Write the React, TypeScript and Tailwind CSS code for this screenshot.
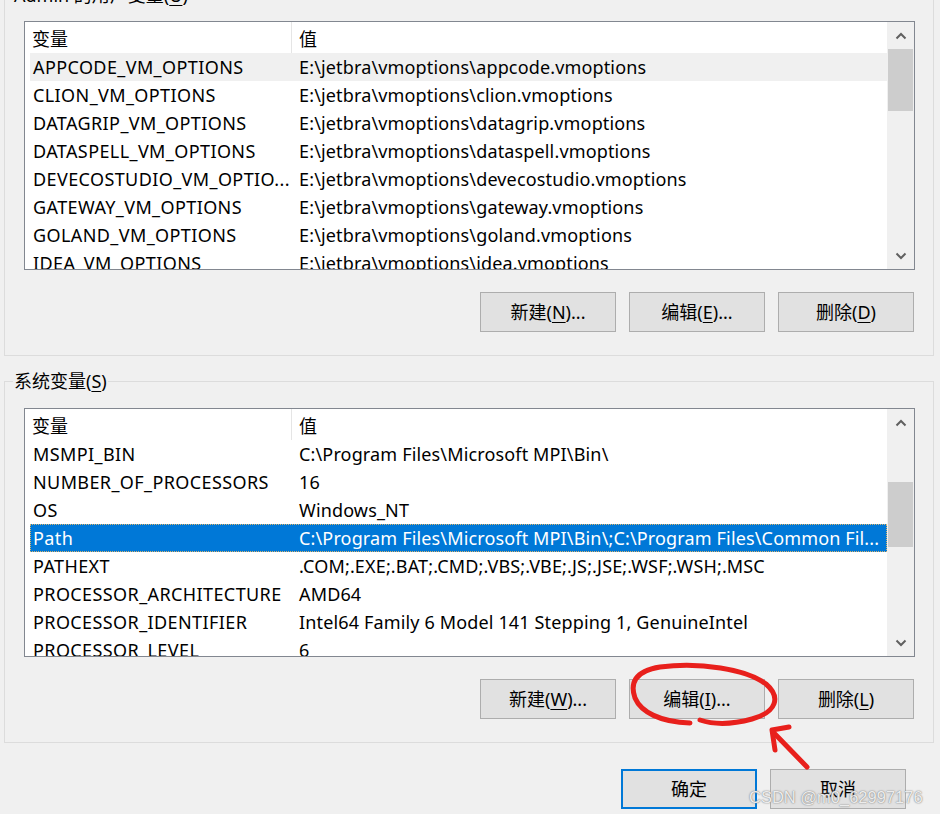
import React from "react";

type RowData = { name: string; value: string; hover?: boolean; selected?: boolean };

const topRows: RowData[] = [
  { name: "APPCODE_VM_OPTIONS", value: "E:\\jetbra\\vmoptions\\appcode.vmoptions", hover: true },
  { name: "CLION_VM_OPTIONS", value: "E:\\jetbra\\vmoptions\\clion.vmoptions" },
  { name: "DATAGRIP_VM_OPTIONS", value: "E:\\jetbra\\vmoptions\\datagrip.vmoptions" },
  { name: "DATASPELL_VM_OPTIONS", value: "E:\\jetbra\\vmoptions\\dataspell.vmoptions" },
  { name: "DEVECOSTUDIO_VM_OPTIO...", value: "E:\\jetbra\\vmoptions\\devecostudio.vmoptions" },
  { name: "GATEWAY_VM_OPTIONS", value: "E:\\jetbra\\vmoptions\\gateway.vmoptions" },
  { name: "GOLAND_VM_OPTIONS", value: "E:\\jetbra\\vmoptions\\goland.vmoptions" },
  { name: "IDEA_VM_OPTIONS", value: "E:\\jetbra\\vmoptions\\idea.vmoptions" },
];

const bottomRows: RowData[] = [
  { name: "MSMPI_BIN", value: "C:\\Program Files\\Microsoft MPI\\Bin\\" },
  { name: "NUMBER_OF_PROCESSORS", value: "16" },
  { name: "OS", value: "Windows_NT" },
  { name: "Path", value: "C:\\Program Files\\Microsoft MPI\\Bin\\;C:\\Program Files\\Common Fil...", selected: true },
  { name: "PATHEXT", value: ".COM;.EXE;.BAT;.CMD;.VBS;.VBE;.JS;.JSE;.WSF;.WSH;.MSC" },
  { name: "PROCESSOR_ARCHITECTURE", value: "AMD64" },
  { name: "PROCESSOR_IDENTIFIER", value: "Intel64 Family 6 Model 141 Stepping 1, GenuineIntel" },
  { name: "PROCESSOR_LEVEL", value: "6" },
];

function Chevron({ up }: { up?: boolean }) {
  return (
    <svg width="12" height="8" viewBox="0 0 12 8">
      <path
        d={up ? "M1.5 6.5 L6 2 L10.5 6.5" : "M1.5 1.5 L6 6 L10.5 1.5"}
        fill="none"
        stroke="#606060"
        strokeWidth="2"
      />
    </svg>
  );
}

function Row({ r }: { r: RowData }) {
  const bg = r.selected
    ? "bg-[#0078d7] text-white outline-1 outline-dotted outline-[#d9b36c] -outline-offset-1"
    : r.hover
    ? "bg-[#f0f0f0] text-black"
    : "text-black";
  return (
    <div className={`flex h-[28px] shrink-0 items-center whitespace-nowrap ${bg}`}>
      <div className="w-[261px] shrink-0 overflow-hidden pl-[3px] tracking-[0.4px]">{r.name}</div>
      <div className="min-w-0 flex-1 overflow-hidden pl-[8px] tracking-[0.15px]">{r.value}</div>
    </div>
  );
}

function ListView({
  rows,
  thumbOffset,
  thumbHeight,
}: {
  rows: RowData[];
  thumbOffset: number;
  thumbHeight: number;
}) {
  return (
    <div className="flex h-[249px] w-[891px] border border-[#828790] bg-white">
      <div className="flex min-w-0 flex-1 flex-col overflow-hidden pl-[5px]">
        <div className="flex h-[31px] shrink-0 items-center pt-[4px] text-black">
          <div className="h-full w-[261px] shrink-0 pl-[2px] leading-[27px]">变量</div>
          <div className="h-[31px] -mt-[4px] w-px bg-[#e5e5e5]" />
          <div className="h-full flex-1 pl-[7px] leading-[27px]">值</div>
        </div>
        {rows.map((r) => (
          <Row key={r.name} r={r} />
        ))}
      </div>
      <div className="flex w-[27px] shrink-0 flex-col bg-[#f0f0f0]">
        <div className="flex h-[26px] shrink-0 items-center justify-center pt-[2px]">
          <Chevron up />
        </div>
        <div className="flex flex-1 flex-col">
          <div style={{ height: thumbOffset }} className="shrink-0" />
          <div style={{ height: thumbHeight }} className="mx-[1px] shrink-0 bg-[#cdcdcd]" />
        </div>
        <div className="flex h-[26px] shrink-0 items-center justify-center">
          <Chevron />
        </div>
      </div>
    </div>
  );
}

function Btn({ children, primary }: { children: React.ReactNode; primary?: boolean }) {
  return (
    <div
      className={`flex h-[40px] w-[136px] items-center justify-center bg-[#e1e1e1] text-black ${
        primary ? "border-2 border-[#0078d7]" : "border border-[#adadad]"
      }`}
    >
      {children}
    </div>
  );
}

function Mn({ k }: { k: string }) {
  return <span className="underline decoration-1 underline-offset-[3px]">{k}</span>;
}

function Group({
  label,
  rows,
  thumbOffset,
  thumbHeight,
  buttons,
  extra,
}: {
  label: React.ReactNode;
  rows: RowData[];
  thumbOffset: number;
  thumbHeight: number;
  buttons: React.ReactNode;
  extra?: string;
}) {
  return (
    <div
      className={`relative ml-[4px] box-border flex h-[361px] w-[930px] flex-col border border-[#dcdcdc] pl-[19px] pt-[25px] ${extra ?? ""}`}
    >
      <div className="absolute left-[8px] top-[-13px] bg-[#f0f0f0] px-[1px] leading-[24px] text-black">
        {label}
      </div>
      <ListView rows={rows} thumbOffset={thumbOffset} thumbHeight={thumbHeight} />
      <div className="mt-[22px] flex w-[890px] justify-end gap-[13px]">{buttons}</div>
    </div>
  );
}

export default function App() {
  return (
    <div
      className="relative h-[814px] w-[940px] overflow-hidden bg-[#f0f0f0] text-[18px] leading-[24px]"
      style={{ fontFamily: '"Noto Sans", "Noto Sans CJK SC", sans-serif' }}
    >
      <div className="flex flex-col">
        <Group
          extra="mt-[-5px]"
          label={
            <>
              Admin 的用户变量(<Mn k="U" />)
            </>
          }
          rows={topRows}
          thumbOffset={1}
          thumbHeight={62}
          buttons={
            <>
              <Btn>
                新建(<Mn k="N" />)...
              </Btn>
              <Btn>
                编辑(<Mn k="E" />)...
              </Btn>
              <Btn>
                删除(<Mn k="D" />)
              </Btn>
            </>
          }
        />
        <Group
          extra="mt-[25px] h-[362px] pt-[26px]"
          label={
            <>
              系统变量(<Mn k="S" />)
            </>
          }
          rows={bottomRows}
          thumbOffset={47}
          thumbHeight={65}
          buttons={
            <>
              <Btn>
                新建(<Mn k="W" />)...
              </Btn>
              <Btn>
                编辑(<Mn k="I" />)...
              </Btn>
              <Btn>
                删除(<Mn k="L" />)
              </Btn>
            </>
          }
        />
        <div className="mt-[26px] flex w-[906px] justify-end gap-[13px]">
          <Btn primary>确定</Btn>
          <Btn>取消</Btn>
        </div>
      </div>

      {/* red annotation */}
      <svg
        className="pointer-events-none absolute left-0 top-0"
        width="940"
        height="814"
        viewBox="0 0 940 814"
      >
        <g fill="none" stroke="#e8201c" strokeWidth="5" strokeLinecap="round" strokeLinejoin="round">
          <path d="M690 723 C660 722 641 712 635 698 C630 684 634 671 660 667 C700 662 746 669 766 684 C781 697 777 712 752 719 C730 725 712 724 700 720" />
          <path d="M807 767 L773 732" />
          <path d="M789 727 L772 730 L775 750" />
        </g>
      </svg>

      {/* watermark */}
      <div
        className="pointer-events-none absolute left-[749px] top-[786px] whitespace-nowrap text-[16.5px] leading-[22px] text-white/85 [text-shadow:0_0_1px_#777,0_0_2px_#999]"
        style={{ fontFamily: '"Liberation Sans", Arial, sans-serif' }}
      >
        CSDN @m0_62997176
      </div>
    </div>
  );
}
